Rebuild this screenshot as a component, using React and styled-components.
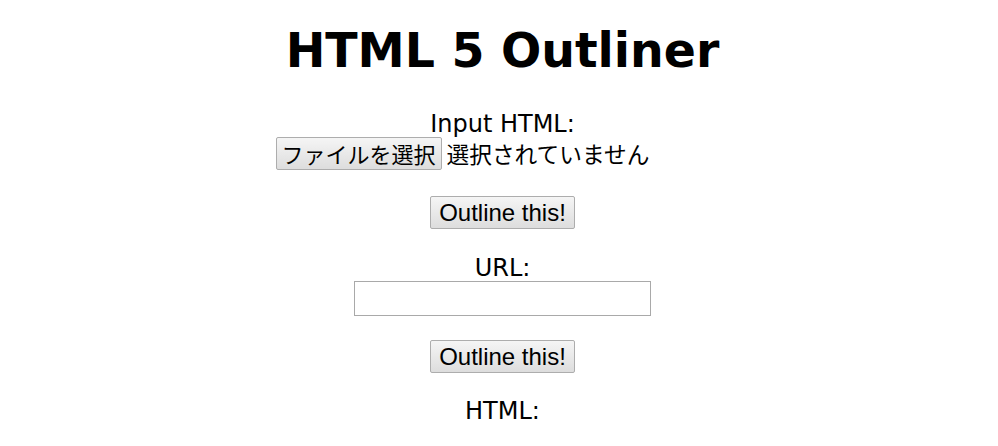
import React from 'react';
import styled, {createGlobalStyle} from "styled-components";

const GlobalStyle = createGlobalStyle`
  body {
    margin: 0;
    background: #fff;
    color: #000;
    font-family: "DejaVu Sans", Verdana, sans-serif;
  }
`;

const Page = styled.div`
  display: flex;
  flex-direction: column;
  align-items: center;
  padding-top: 23px;
  padding-left: 7px;
`;

const Title = styled.h1`
  margin: 0;
  font-size: 47.4px;
  line-height: 56px;
  font-weight: bold;
`;

const Form = styled.form`
  display: flex;
  flex-direction: column;
  align-items: center;
  margin-top: ${({top}) => top}px;
`;

const Label = styled.div`
  font-size: 24px;
  line-height: 26px;
`;

const FileRow = styled.div`
  width: 454px;
  display: flex;
  align-items: center;
  gap: 5px;
`;

const Button = styled.button`
  font-family: "Liberation Sans", Arial, sans-serif;
  font-size: 24px;
  line-height: 27px;
  padding: 2px 8px;
  border: 1px solid #adadad;
  border-radius: 2px;
  background: linear-gradient(#f5f5f5, #dddddd);
  color: #000;
  margin-top: ${({top}) => top || 0}px;
`;

const FileButton = styled(Button)`
  font-family: "Noto Sans CJK JP", sans-serif;
  font-size: 22px;
  line-height: 27px;
  padding: 2px 5px;
`;

const FileStatus = styled.span`
  font-family: "Noto Sans CJK JP", sans-serif;
  font-size: 22.7px;
  line-height: 30px;
`;

const TextInput = styled.input`
  box-sizing: border-box;
  width: 297px;
  height: 35px;
  border: 1px solid #a9a9a9;
  padding: 2px 4px;
  font-size: 20px;
`;

const App = () => {
  return (
    <>
      <GlobalStyle/>
      <Page>
        <Title>HTML 5 Outliner</Title>
        <Form top={32}>
          <Label>Input HTML:</Label>
          <FileRow>
            <FileButton type="button">ファイルを選択</FileButton>
            <FileStatus>選択されていません</FileStatus>
          </FileRow>
          <Button type="button" top={26}>Outline this!</Button>
        </Form>
        <Form top={26}>
          <Label>URL:</Label>
          <TextInput type="text"/>
          <Button type="button" top={24}>Outline this!</Button>
        </Form>
        <Form top={25}>
          <Label>HTML:</Label>
        </Form>
      </Page>
    </>
  );
};

export default App;
